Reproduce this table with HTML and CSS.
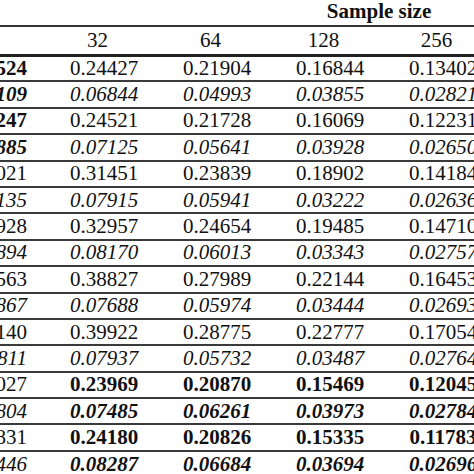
FILE: index.html
```html
<!DOCTYPE html>
<html lang="en">
<head>
  <meta charset="UTF-8" />
  <meta name="viewport" content="width=device-width, initial-scale=1.0"/>
  <title>Sample size table</title>
  <link rel="stylesheet" href="styles.css">
</head>
<body>

  <div class="frame">
    <table class="results">
      <colgroup>
        <col class="col-first">
        <col class="col-n"><col class="col-n"><col class="col-n"><col class="col-n"><col class="col-n">
      </colgroup>
      <thead>
        <tr class="group-row">
          <th></th>
          <th></th>
          <th colspan="4">Sample size</th>
        </tr>
        <tr class="size-row">
          <th></th>
          <th>32</th>
          <th>64</th>
          <th>128</th>
          <th>256</th>
          <th>512</th>
        </tr>
      </thead>
      <tbody>
        <tr><td class="best">0.27524</td><td>0.24427</td><td>0.21904</td><td>0.16844</td><td>0.13402</td><td>0.10217</td></tr>
        <tr class="se"><td class="best">0.07109</td><td>0.06844</td><td>0.04993</td><td>0.03855</td><td>0.02821</td><td>0.02013</td></tr>
        <tr><td class="best">0.27247</td><td>0.24521</td><td>0.21728</td><td>0.16069</td><td>0.12231</td><td>0.09540</td></tr>
        <tr class="se"><td class="best">0.07885</td><td>0.07125</td><td>0.05641</td><td>0.03928</td><td>0.02650</td><td>0.01982</td></tr>
        <tr><td>0.36021</td><td>0.31451</td><td>0.23839</td><td>0.18902</td><td>0.14184</td><td>0.10836</td></tr>
        <tr class="se"><td>0.09135</td><td>0.07915</td><td>0.05941</td><td>0.03222</td><td>0.02636</td><td>0.01877</td></tr>
        <tr><td>0.37928</td><td>0.32957</td><td>0.24654</td><td>0.19485</td><td>0.14710</td><td>0.11204</td></tr>
        <tr class="se"><td>0.08894</td><td>0.08170</td><td>0.06013</td><td>0.03343</td><td>0.02757</td><td>0.01935</td></tr>
        <tr><td>0.44563</td><td>0.38827</td><td>0.27989</td><td>0.22144</td><td>0.16453</td><td>0.12478</td></tr>
        <tr class="se"><td>0.08867</td><td>0.07688</td><td>0.05974</td><td>0.03444</td><td>0.02693</td><td>0.01904</td></tr>
        <tr><td>0.46140</td><td>0.39922</td><td>0.28775</td><td>0.22777</td><td>0.17054</td><td>0.12961</td></tr>
        <tr class="se"><td>0.08811</td><td>0.07937</td><td>0.05732</td><td>0.03487</td><td>0.02764</td><td>0.01950</td></tr>
        <tr><td>0.27027</td><td class="best">0.23969</td><td class="best">0.20870</td><td class="best">0.15469</td><td class="best">0.12045</td><td class="best">0.09312</td></tr>
        <tr class="se"><td>0.08804</td><td class="best">0.07485</td><td class="best">0.06261</td><td class="best">0.03973</td><td class="best">0.02784</td><td class="best">0.01966</td></tr>
        <tr><td>0.26831</td><td class="best">0.24180</td><td class="best">0.20826</td><td class="best">0.15335</td><td class="best">0.11783</td><td class="best">0.09155</td></tr>
        <tr class="se"><td>0.09446</td><td class="best">0.08287</td><td class="best">0.06684</td><td class="best">0.03694</td><td class="best">0.02696</td><td class="best">0.01921</td></tr>
      </tbody>
    </table>
  </div>

</body>
</html>
```

FILE: styles.css
```css
* { box-sizing: border-box; }

body {
  margin: 0;
  background: #fff;
  color: #111;
  font-family: "Liberation Serif", "Times New Roman", serif;
}

.frame {
  width: 474px;
  height: 474px;
  overflow: hidden;
}

.results {
  border-collapse: collapse;
  table-layout: fixed;
  width: 685px;
  margin-left: -80px;
  font-size: 21px;
  line-height: 1;
}

.col-first { width: 120px; }
.col-n { width: 113px; }

.results th,
.results td {
  padding: 0;
  text-align: center;
  vertical-align: middle;
  white-space: nowrap;
}

.results td {
  padding-left: 15px;
}

.results td:first-child {
  text-align: right;
  padding-left: 0;
  padding-right: 13px;
}

.group-row th {
  height: 26px;
  font-weight: bold;
  border-bottom: 2px solid #333;
  padding-bottom: 3px;
}

.size-row th {
  height: 29px;
  font-weight: normal;
  padding-left: 2px;
  border-bottom: 3px solid #222;
}

.results tbody td {
  height: 26.4px;
  border-bottom: 2px solid #3a3a3a;
}

.results tbody tr:last-child td { border-bottom: none; }

.se td { font-style: italic; }
.best { font-weight: bold; }
```
